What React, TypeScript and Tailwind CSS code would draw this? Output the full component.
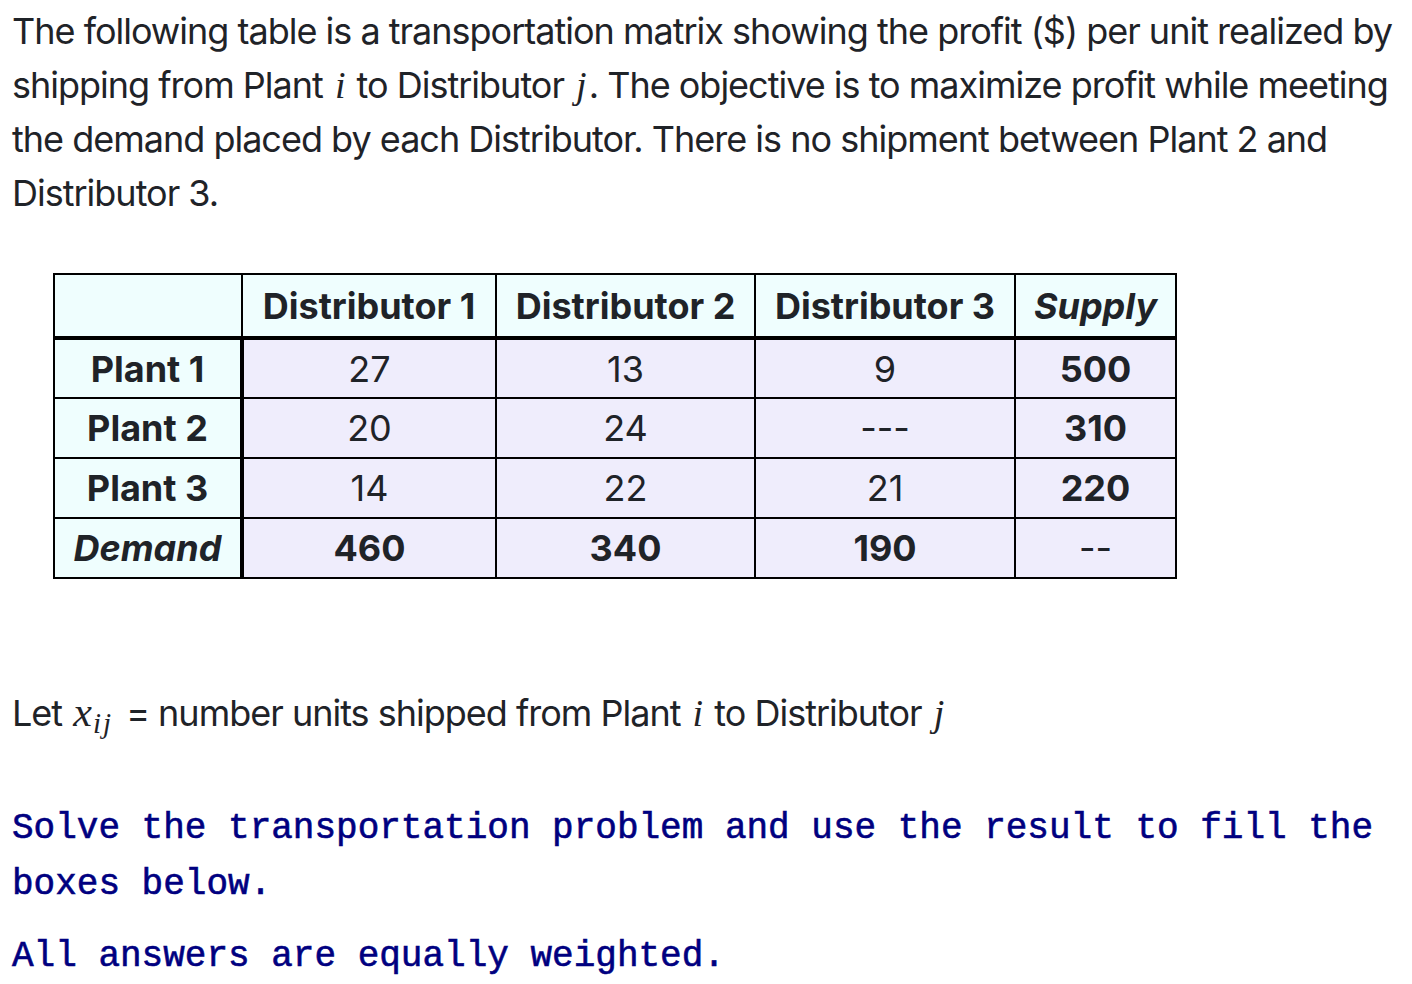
import React from "react";

const M = ({ children, cls = "text-[38px] px-[3px]" }: { children: React.ReactNode; cls?: string }) => (
  <span className={`italic ${cls}`} style={{ fontFamily: '"Liberation Serif", "DejaVu Serif", serif' }}>
    {children}
  </span>
);

export default function App() {
  const head = "bg-[#effefe] border-2 border-black font-bold px-3 text-center";
  const body = "bg-[#efedfc] border-2 border-black text-center";
  const rows: [string, string, string, string, string][] = [
    ["Plant 1", "27", "13", "9", "500"],
    ["Plant 2", "20", "24", "---", "310"],
    ["Plant 3", "14", "22", "21", "220"],
  ];
  return (
    <div
      className="w-[1412px] min-h-[984px] bg-white px-[12px] pt-[4px] text-[#1f2328]"
      style={{ fontFamily: 'Inter, "Noto Sans", sans-serif' }}
    >
      <p className="text-[36px] leading-[54px] tracking-[-1px]">
        <span className="block whitespace-nowrap">
          The following table is a transportation matrix showing the profit ($) per unit realized by
        </span>
        <span className="block whitespace-nowrap">
          shipping from Plant <M>i</M> to Distributor <M>j</M>. The objective is to maximize profit while meeting
        </span>
        <span className="block whitespace-nowrap">
          the demand placed by each Distributor. There is no shipment between Plant 2 and
        </span>
        <span className="block whitespace-nowrap">Distributor 3.</span>
      </p>

      <table className="ml-[41px] mt-[53px] border-collapse text-[36px]">
        <tbody>
          <tr className="h-[64px]">
            <td className={`${head} w-[188px] border-b-4 border-r-2`}></td>
            <td className={`${head} w-[254px] border-b-4`}>Distributor 1</td>
            <td className={`${head} w-[259px] border-b-4`}>Distributor 2</td>
            <td className={`${head} w-[260px] border-b-4`}>Distributor 3</td>
            <td className={`${head} w-[161px] border-b-4 italic`}>Supply</td>
          </tr>
          {rows.map((r) => (
            <tr key={r[0]} className="h-[60px]">
              <td className={`${head} border-r-4`}>{r[0]}</td>
              <td className={body}>{r[1]}</td>
              <td className={body}>{r[2]}</td>
              <td className={body}>{r[3]}</td>
              <td className={`${body} font-bold`}>{r[4]}</td>
            </tr>
          ))}
          <tr className="h-[60px]">
            <td className={`${head} border-r-4 italic`}>Demand</td>
            <td className={`${body} font-bold`}>460</td>
            <td className={`${body} font-bold`}>340</td>
            <td className={`${body} font-bold`}>190</td>
            <td className={body}>--</td>
          </tr>
        </tbody>
      </table>

      <p className="mt-[106px] h-[54px] whitespace-nowrap text-[36px] leading-[54px] tracking-[-1px]">
        Let <M cls="text-[42px] ml-[2px]">x</M>
        <span className="relative top-[7px] ml-[2px] mr-[4px]">
          <M cls="text-[29px] tracking-[2px]">ij</M>
        </span>{" "}
        = number units shipped from Plant <M>i</M> to Distributor <M>j</M>
      </p>

      <div
        className="mt-[62px] text-[36px] leading-[56px] text-[#000080] [-webkit-text-stroke:0.6px_#000080]"
        style={{ fontFamily: '"Liberation Mono", "Courier New", monospace' }}
      >
        <p>Solve the transportation problem and use the result to fill the boxes below.</p>
        <p className="mt-[16px]">All answers are equally weighted.</p>
      </div>
    </div>
  );
}
